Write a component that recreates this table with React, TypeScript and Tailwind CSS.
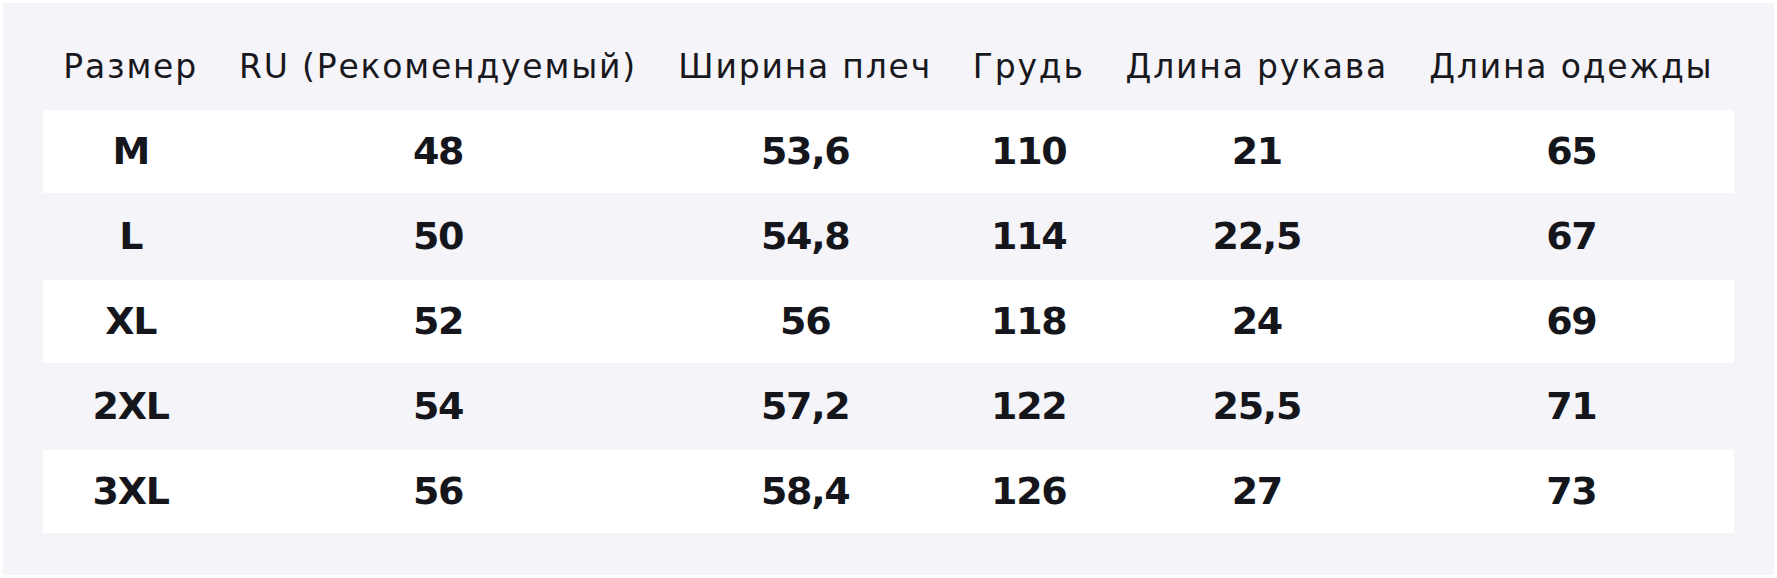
import React from "react"

const headers = ["Размер", "RU (Рекомендуемый)", "Ширина плеч", "Грудь", "Длина рукава", "Длина одежды"]

const rows = [
  ["M", "48", "53,6", "110", "21", "65"],
  ["L", "50", "54,8", "114", "22,5", "67"],
  ["XL", "52", "56", "118", "24", "69"],
  ["2XL", "54", "57,2", "122", "25,5", "71"],
  ["3XL", "56", "58,4", "126", "27", "73"],
]

export default function App() {
  return (
    <div className="w-[1777px] h-[578px] bg-white p-[3px]" style={{ fontFamily: '"DejaVu Sans", Verdana, sans-serif' }}>
      <div className="h-full bg-[#f4f4f9] px-[40px] pt-[20px]">
        <table className="w-full border-collapse">
          <thead>
            <tr className="h-[87px]">
              {headers.map((h) => (
                <th key={h} className="px-[20px] text-center align-middle text-[33px] font-normal tracking-[1.8px] text-[#18181d] whitespace-nowrap">
                  {h}
                </th>
              ))}
            </tr>
          </thead>
          <tbody>
            {rows.map((r, i) => (
              <tr key={r[0]} className={i % 2 === 0 ? "h-[83px] bg-white" : "h-[87px]"}>
                {r.map((c, j) => (
                  <td key={j} className="px-[20px] text-center align-middle text-[38px] font-bold tracking-[-1.3px] text-[#15161b] whitespace-nowrap">
                    {c}
                  </td>
                ))}
              </tr>
            ))}
          </tbody>
        </table>
      </div>
    </div>
  )
}
